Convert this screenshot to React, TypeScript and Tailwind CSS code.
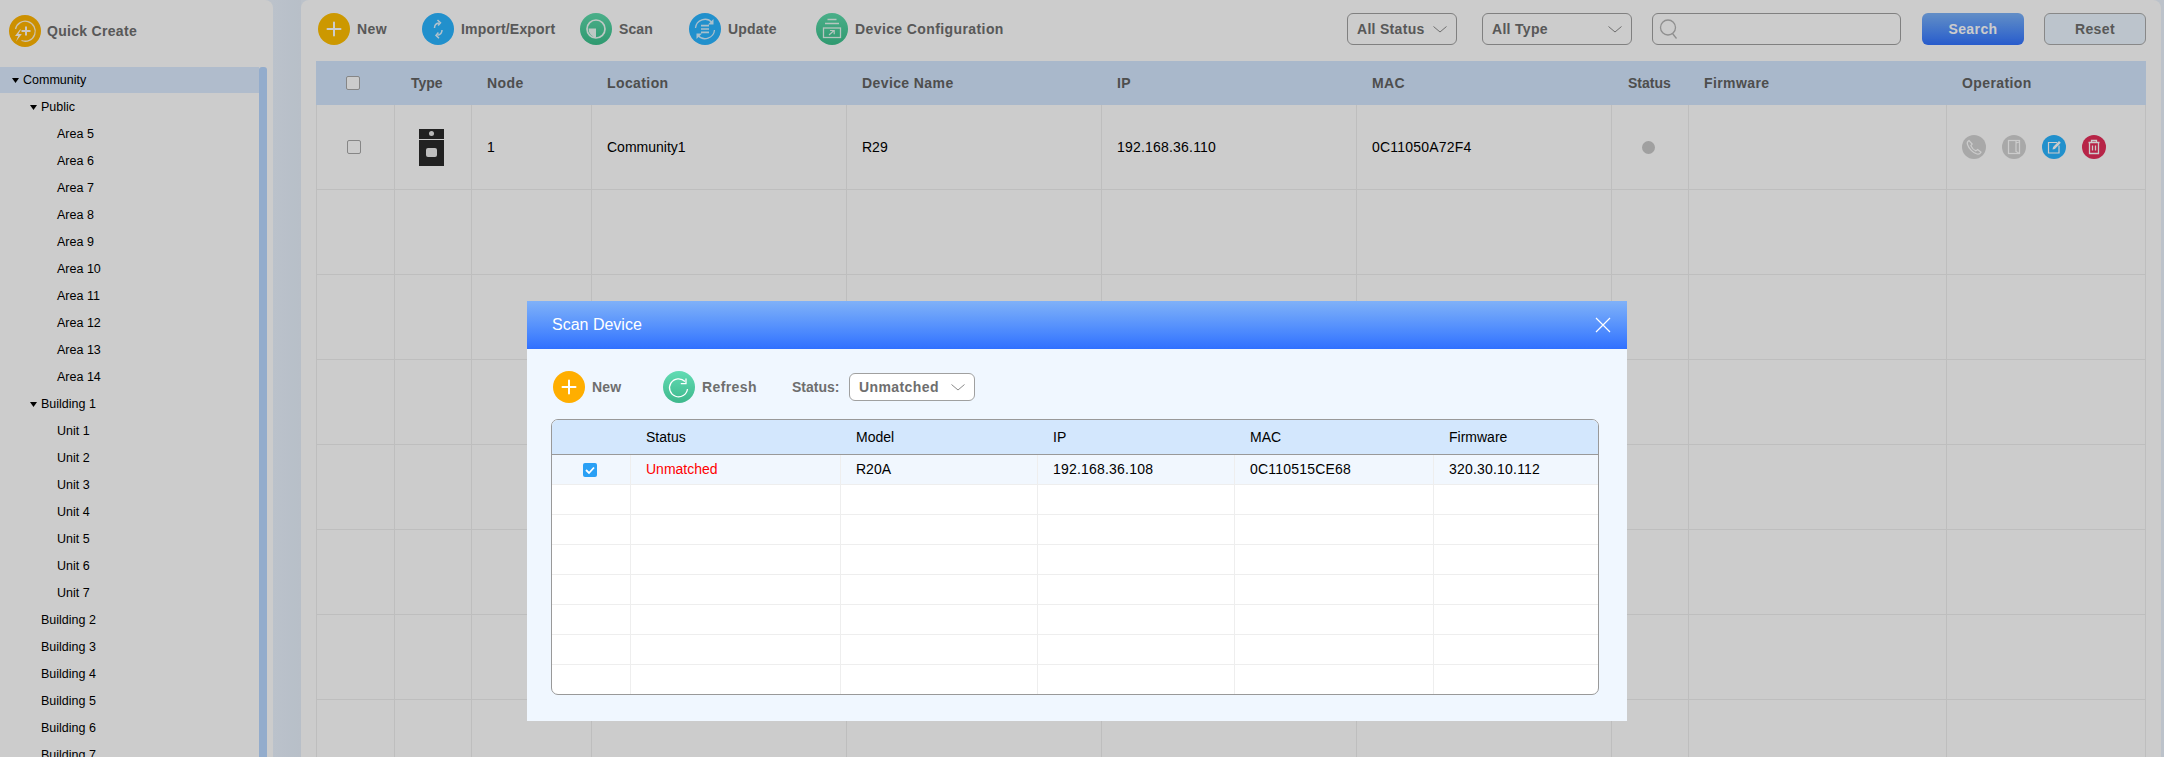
import React from "react";

const Plus = () => (
  <svg viewBox="0 0 32 32" className="w-8 h-8">
    <path d="M16 9.5v13M9.5 16h13" stroke="#fff" strokeWidth="2" fill="none" strokeLinecap="round" />
  </svg>
);
const ImportExport = () => (
  <svg viewBox="0 0 32 32" className="w-8 h-8" fill="none" stroke="#fff" strokeWidth="1.5" opacity="0.85">
    <path d="M12.5 15c0-2.6 1.5-4.6 4.5-5" />
    <path d="M15.5 7l3 2.8-2.4 2.8" />
    <path d="M20 17c0 2.8-1.6 4.8-4.5 5.2" />
    <path d="M17 25.2l-3-2.8 2.4-2.8" />
  </svg>
);
const Scan = () => (
  <svg viewBox="0 0 32 32" className="w-8 h-8">
    <circle cx="16" cy="16" r="9" fill="none" stroke="#fff" strokeWidth="1.7" opacity="0.9" />
    <path d="M8.5 15.5h7.5v9A9 9 0 0 1 8.5 15.5z" fill="#fff" opacity="0.9" />
  </svg>
);
const Update = () => (
  <svg viewBox="0 0 32 32" className="w-8 h-8" fill="none" stroke="#fff" strokeWidth="1.3" opacity="0.8">
    <path d="M6.5 15a9.5 9.5 0 0 1 16.5-5.5" />
    <path d="M25.5 17a9.5 9.5 0 0 1-16.5 5.5" />
    <path d="M24.5 6v5.5H19z" fill="#fff" stroke="none" />
    <path d="M7.5 26v-5.5H13z" fill="#fff" stroke="none" />
    <path d="M12 12.6h8M12 16h8M12 19.4h8" strokeWidth="1.7" />
  </svg>
);
const DeviceConfig = () => (
  <svg viewBox="0 0 32 32" className="w-8 h-8" fill="none" stroke="#fff" opacity="0.85">
    <path d="M11.5 6.5h9M9 10.5h14" strokeWidth="1.6" />
    <rect x="7.5" y="15" width="17" height="9.5" strokeWidth="1.3" />
    <path d="M13 22l5-4.5M14 17.5h4.2v3.8" strokeWidth="1.2" />
  </svg>
);
const Refresh = () => (
  <svg viewBox="0 0 32 32" className="w-8 h-8" fill="none" stroke="#fff" strokeWidth="1.3">
    <path d="M22 10.5a9 9 0 1 0 2.5 7.5" />
    <path d="M23 7.5v5.2h-5.2" />
  </svg>
);
const Quick = () => (
  <svg viewBox="0 0 32 32" className="w-8 h-8" fill="none" stroke="#fff">
    <path d="M6.5 14a10 10 0 1 1 6 11.5" strokeWidth="1.3" opacity="0.85" />
    <path d="M17 11.5v9M12.5 16h9" strokeWidth="2" opacity="0.95" />
    <path d="M11 14.5l-5 6.5h3.2l-2.2 5.5 5.8-7.5h-3.4l2.6-4.5z" fill="#fff" stroke="none" opacity="0.95" />
  </svg>
);
const Chevron = () => (
  <svg viewBox="0 0 14 7" className="w-[14px] h-[7px] shrink-0" fill="none" stroke="#8a8a8a" strokeWidth="1">
    <path d="M0.5 0.5L7 6l6.5-5.5" />
  </svg>
);
const Caret = () => (
  <svg viewBox="0 0 7 5" className="w-[7px] h-[5px] shrink-0">
    <path d="M0 0h7L3.5 5z" fill="#000" />
  </svg>
);
const Close = () => (
  <svg viewBox="0 0 16 16" className="w-4 h-4" fill="none" stroke="#fff" strokeWidth="1.2">
    <path d="M1 1l14 14M15 1L1 15" />
  </svg>
);

function ToolButton({ width, color, icon, label, tracking = "tracking-[0.4px]" }: { width: string; color: string; icon: React.ReactNode; label: string; tracking?: string }) {
  return (
    <button className={`flex items-center gap-[7px] ${width}`}>
      <span className={`w-8 h-8 rounded-full flex items-center justify-center shrink-0 ${color}`}>{icon}</span>
      <span className={`text-[14px] font-bold text-[#6e6e6e] whitespace-nowrap ${tracking}`}>{label}</span>
    </button>
  );
}

function SelectBox({ width, label }: { width: string; label: string }) {
  return (
    <div className={`${width} h-8 border border-[#a0a0a0] rounded-[6px] flex items-center justify-between pl-[9px] pr-[9px]`}>
      <span className="text-[14px] font-bold tracking-[0.3px] text-[#6e6e6e]">{label}</span>
      <Chevron />
    </div>
  );
}

const tree: { label: string; pad: string; caret?: boolean; active?: boolean }[] = [
  { label: "Community", pad: "pl-[12px]", caret: true, active: true },
  { label: "Public", pad: "pl-[30px]", caret: true },
  ...["Area 5", "Area 6", "Area 7", "Area 8", "Area 9", "Area 10", "Area 11", "Area 12", "Area 13", "Area 14"].map((label) => ({ label, pad: "pl-[57px]" })),
  { label: "Building 1", pad: "pl-[30px]", caret: true },
  ...["Unit 1", "Unit 2", "Unit 3", "Unit 4", "Unit 5", "Unit 6", "Unit 7"].map((label) => ({ label, pad: "pl-[57px]" })),
  ...["Building 2", "Building 3", "Building 4", "Building 5", "Building 6", "Building 7"].map((label) => ({ label, pad: "pl-[41px]" })),
];

const mainGrid = "grid grid-cols-[79px_77px_120px_255px_255px_255px_255px_77px_258px_199px]";
const mainHeaders = ["", "Type", "Node", "Location", "Device Name", "IP", "MAC", "Status", "Firmware", "Operation"];
const mainRow = ["", "", "1", "Community1", "R29", "192.168.36.110", "0C11050A72F4", "", "", ""];

const Check = () => <span className="block w-[14px] h-[14px] border border-[#a8a8a8] rounded-[2px] bg-white" />;

function OpIcon({ color, children }: { color: string; children: React.ReactNode }) {
  return <span className={`w-6 h-6 rounded-full flex items-center justify-center ${color}`}>{children}</span>;
}

function MainRowCell({ index }: { index: number }) {
  if (index === 0) return <span className="ml-[30px]"><Check /></span>;
  if (index === 1)
    return (
      <span className="ml-[24px] w-[25px] h-[37px] flex flex-col">
        <span className="h-[10px] bg-[#2a2a2a] flex items-center justify-center">
          <span className="w-[5px] h-[5px] rounded-full bg-[#e8e8e8]" />
        </span>
        <span className="mt-[1px] flex-1 bg-[#2a2a2a] flex items-center justify-center">
          <span className="w-[11px] h-[9px] rounded-[2px] bg-[#eeeeee]" />
        </span>
      </span>
    );
  if (index === 7) return <span className="ml-[30px] w-[13px] h-[13px] rounded-full bg-[#c8c8c8]" />;
  if (index === 9)
    return (
      <span className="pl-[15px] flex gap-4">
        <OpIcon color="bg-[#d3d3d3]">
          <svg viewBox="0 0 24 24" className="w-6 h-6" fill="none" stroke="#fff" strokeWidth="1.2">
            <path d="M7 5.5c-1.5 1-2.2 2.2-1.5 4 1.3 4 5.5 8.5 9.5 9.5 1.8.4 3.2-.3 4-1.8l-3.4-2.6-1.7 1.3c-2-.8-4-3-5-5.2l1.3-1.6z" />
          </svg>
        </OpIcon>
        <OpIcon color="bg-[#d3d3d3]">
          <svg viewBox="0 0 24 24" className="w-6 h-6" fill="none" stroke="#fff" strokeWidth="1.2">
            <rect x="6.5" y="5.5" width="11" height="13" />
            <path d="M14 5.5v2.5l3.5-1M14 8v8.5l3.5 2" />
          </svg>
        </OpIcon>
        <OpIcon color="bg-[#2ab4ff]">
          <svg viewBox="0 0 24 24" className="w-6 h-6" fill="none" stroke="#fff" strokeWidth="1.2">
            <path d="M15 7.5H6.5v10.5h10.5v-7.5" />
            <path d="M10.5 14.5l.6-2.4L17 6l1.8 1.8-5.9 6.1z" fill="#fff" stroke="none" />
          </svg>
        </OpIcon>
        <OpIcon color="bg-[#e52d59]">
          <svg viewBox="0 0 24 24" className="w-6 h-6" fill="none" stroke="#fff" strokeWidth="1.3">
            <path d="M6.5 7.5h11M9.5 7.5V5.5h5v2M7.5 7.5v11h9v-11M10.5 10.5v5M13.5 10.5v5" />
          </svg>
        </OpIcon>
      </span>
    );
  return <span className={`pl-[15px] text-[14px] text-black ${index === 5 || index === 6 ? "tracking-[0.2px]" : ""}`}>{mainRow[index]}</span>;
}

const modalGrid = "grid grid-cols-[79px_210px_197px_197px_199px_164px]";
const modalHeaders = ["", "Status", "Model", "IP", "MAC", "Firmware"];
const modalRow = ["", "Unmatched", "R20A", "192.168.36.108", "0C110515CE68", "320.30.10.112"];

export default function App() {
  return (
    <div className="relative w-[2164px] h-[757px] overflow-hidden bg-[#ebf3fd] font-['Liberation_Sans',Arial,sans-serif] text-[14px]">
      <div className="flex h-full">
        <aside className="w-[273px] shrink-0 bg-white rounded-tr-[8px] flex flex-col overflow-hidden">
          <div className="h-[67px] shrink-0 pt-[15px] pl-[9px] flex items-start gap-[6px]">
            <span className="w-8 h-8 rounded-full bg-[#ffb400] flex items-center justify-center shrink-0"><Quick /></span>
            <span className="h-8 flex items-center text-[14px] font-bold tracking-[0.3px] text-[#6e6e6e]">Quick Create</span>
          </div>
          <div className="flex flex-1 min-h-0">
            <div className="w-[259px] shrink-0">
              {tree.map((item) => (
                <div
                  key={item.label}
                  className={`h-[27px] flex items-center gap-[4px] text-[12.5px] text-black ${item.pad} ${item.active ? "bg-[#dcecff] border-b border-white" : ""}`}
                >
                  {item.caret && <Caret />}
                  <span>{item.label}</span>
                </div>
              ))}
            </div>
            <div className="w-2 shrink-0 bg-[#b8d8ff] rounded-t-[3px]" />
          </div>
        </aside>

        <div className="w-[28px] shrink-0 bg-gradient-to-r from-[#eaf3fe] to-[#e6effb]" />

        <main className="w-[1860px] shrink-0 bg-white rounded-t-[8px] px-[15px] overflow-hidden">
          <div className="h-[61px] pt-[13px] flex items-start">
            <div className="flex pl-[2px] items-center">
              <ToolButton width="w-[104px]" color="bg-[#ffbf00]" icon={<Plus />} label="New" />
              <ToolButton width="w-[158px]" color="bg-[#2ab4ff]" icon={<ImportExport />} label="Import/Export" tracking="tracking-[0.2px]" />
              <ToolButton width="w-[109px]" color="bg-gradient-to-b from-[#5ddbac] to-[#3bc08c]" icon={<Scan />} label="Scan" tracking="tracking-[0.1px]" />
              <ToolButton width="w-[127px]" color="bg-[#2ab4ff]" icon={<Update />} label="Update" tracking="tracking-[0.2px]" />
              <ToolButton width="w-[190px]" color="bg-gradient-to-b from-[#5ddbac] to-[#3bc08c]" icon={<DeviceConfig />} label="Device Configuration" />
            </div>
            <div className="ml-auto flex items-center">
              <SelectBox width="w-[110px]" label="All Status" />
              <div className="ml-[25px]"><SelectBox width="w-[150px]" label="All Type" /></div>
              <div className="ml-5 w-[249px] h-8 border border-[#a0a0a0] rounded-[6px] flex items-center pl-[6px]">
                <svg viewBox="0 0 20 22" className="w-5 h-[22px]" fill="none" stroke="#b4b4b4" strokeWidth="1.3">
                  <circle cx="9" cy="9.5" r="7.5" />
                  <path d="M13.5 15.5l4 5" />
                </svg>
              </div>
              <button className="ml-[21px] w-[102px] h-8 rounded-[6px] bg-gradient-to-b from-[#7cb2f8] to-[#3272ff] text-white text-[14px] font-bold tracking-[0.4px]">Search</button>
              <button className="ml-5 w-[102px] h-8 rounded-[6px] border border-[#aaaaaa] bg-[#ebf6ff] text-[#6e6e6e] text-[14px] font-bold tracking-[0.4px]">Reset</button>
            </div>
          </div>

          <div className={`${mainGrid} h-[44px] bg-[#d4e7fe]`}>
            {mainHeaders.map((h, i) => (
              <div
                key={i}
                className={`flex items-center font-bold text-[14px] text-[#626262] ${i === 1 || i === 7 ? "tracking-normal" : "tracking-[0.4px]"} ${i === 0 ? "pl-[30px]" : i === 1 || i === 7 ? "pl-[16px]" : "pl-[15px]"}`}
              >
                {i === 0 ? <Check /> : h}
              </div>
            ))}
          </div>
          {[0, 1, 2, 3, 4, 5, 6, 7].map((r) => (
            <div key={r} className={`${mainGrid} h-[85px]`}>
              {mainHeaders.map((_, i) => (
                <div key={i} className={`flex items-center border-r border-b border-[#eeeeee] ${i === 0 ? "border-l" : ""}`}>
                  {r === 0 && <MainRowCell index={i} />}
                </div>
              ))}
            </div>
          ))}
        </main>
      </div>

      <div className="absolute inset-0 bg-black/20" />

      <div className="absolute left-[527px] top-[301px] w-[1100px] h-[420px] bg-[#f0f7ff] flex flex-col">
        <div className="h-[48px] shrink-0 bg-gradient-to-b from-[#80b1f8] to-[#3070ff] flex items-center justify-between pl-[25px] pr-[16px]">
          <span className="text-[16px] text-white">Scan Device</span>
          <Close />
        </div>
        <div className="pt-[22px] px-[24px]">
          <div className="flex items-center h-8 pl-[2px] mb-4">
            <button className="flex items-center gap-[7px] w-[110px]">
              <span className="w-8 h-8 rounded-full bg-[#ffae00] flex items-center justify-center"><Plus /></span>
              <span className="text-[14px] font-bold tracking-[0.2px] text-[#6e6e6e]">New</span>
            </button>
            <button className="flex items-center gap-[7px] w-[129px]">
              <span className="w-8 h-8 rounded-full bg-gradient-to-b from-[#62dcb4] to-[#3db88c] flex items-center justify-center"><Refresh /></span>
              <span className="text-[14px] font-bold tracking-[0.4px] text-[#6e6e6e]">Refresh</span>
            </button>
            <span className="text-[14px] font-bold text-[#6e6e6e] w-[57px]">Status:</span>
            <div className="w-[126px] h-7 border border-[#a0a0a0] rounded-[6px] bg-white flex items-center justify-between pl-[9px] pr-[9px]">
              <span className="text-[14px] font-bold tracking-[0.4px] text-[#6e6e6e]">Unmatched</span>
              <Chevron />
            </div>
          </div>
          <div className="w-[1048px] h-[276px] border border-[#999999] rounded-[7px] bg-white overflow-hidden">
            <div className={`${modalGrid} h-[35px] bg-[#d3e7fd] border-b border-[#999999]`}>
              {modalHeaders.map((h, i) => (
                <div key={i} className="flex items-center pl-[15px] text-[14px] text-black">{h}</div>
              ))}
            </div>
            {[0, 1, 2, 3, 4, 5, 6, 7].map((r) => (
              <div key={r} className={`${modalGrid} h-[30px] ${r === 0 ? "bg-[#f1f7fe]" : ""}`}>
                {modalRow.map((cell, i) => (
                  <div key={i} className={`flex items-center border-b border-[#eeeeee] ${i < 5 ? "border-r" : ""} ${i === 0 ? "justify-center pr-[2px]" : "pl-[15px]"}`}>
                    {r === 0 && i === 0 && (
                      <span className="w-[14px] h-[14px] rounded-[2px] bg-[#2aa0f5] flex items-center justify-center">
                        <svg viewBox="0 0 14 14" className="w-[14px] h-[14px]" fill="none" stroke="#fff" strokeWidth="1.8"><path d="M3 7l3 3 5-5.5" /></svg>
                      </span>
                    )}
                    {r === 0 && i > 0 && <span className={`text-[14px] ${i === 1 ? "text-[#ff0000]" : "text-black"} ${i >= 3 ? "tracking-[0.2px]" : ""}`}>{cell}</span>}
                  </div>
                ))}
              </div>
            ))}
          </div>
        </div>
      </div>
    </div>
  );
}
